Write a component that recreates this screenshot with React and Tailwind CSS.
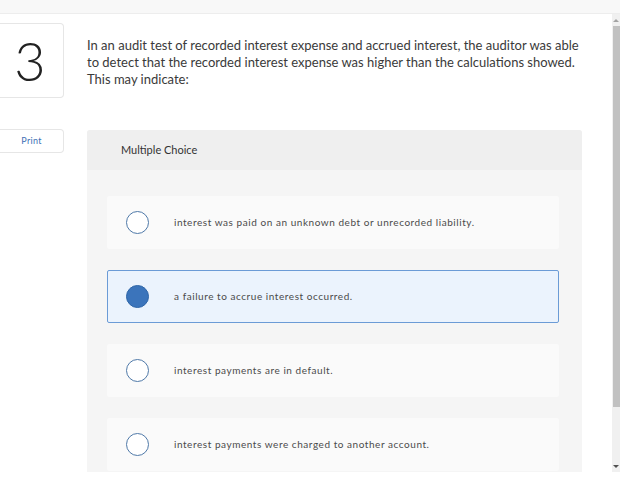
import React from 'react';

const options = [
  { id: 1, text: 'interest was paid on an unknown debt or unrecorded liability.' },
  { id: 2, text: 'a failure to accrue interest occurred.' },
  { id: 3, text: 'interest payments are in default.' },
  { id: 4, text: 'interest payments were charged to another account.' },
];

const Option = ({ text, selected }) => (
  <div
    className={
      'flex items-center h-[53px] shrink-0 rounded-[2px] ' +
      (selected ? 'bg-[#ebf3fd] border border-[#6b9bd6] pl-[18px]' : 'bg-[#fafafa] pl-[19px]')
    }
  >
    {selected ? (
      <span className="w-[23px] h-[23px] rounded-full bg-[#3b74bb] border border-[#2f66a8] shrink-0" />
    ) : (
      <span className="w-[23px] h-[23px] rounded-full bg-white border-[1.5px] border-[#4f79a8] shrink-0" />
    )}
    <span className="ml-[25px] text-[10px] tracking-[0.55px] text-[#4a4a4a]">{text}</span>
  </div>
);

export default function App() {
  const selected = 2;

  return (
    <div className="w-[630px] h-[496px] bg-white overflow-hidden font-['Lato','Open_Sans',sans-serif]">
      <div className="w-[620px] h-[14px] bg-[#f8f8f8] border-b border-[#ededed]" />

      <div className="flex w-[620px] h-[458px]">
        {/* Main */}
        <div className="flex w-[612px] overflow-hidden">
          <div className="w-[64px] shrink-0 pt-[9px] flex flex-col">
            <div className="h-[75px] border border-l-0 border-[#e6e6e6] rounded-r-[4px] flex items-center justify-center">
              <span className="text-[54px] leading-none font-light text-[#222] ml-[-3px]">3</span>
            </div>
            <div className="mt-[31px] h-[24px] border border-l-0 border-[#e6e6e6] rounded-r-[4px] flex items-center justify-center">
              <span className="text-[9px] tracking-[0.3px] text-[#3f70b5]">Print</span>
            </div>
          </div>

          <div className="ml-[23px] w-[495px] shrink-0 flex flex-col">
            <p className="mt-[23px] text-[13px] leading-[17px] text-[#3a3a3a] w-[495px]">
              In an audit test of recorded interest expense and accrued interest, the auditor was able to detect that the recorded interest expense was higher than the calculations showed. This may indicate:
            </p>

            <div className="mt-[42px] flex flex-col bg-[#f5f5f5] rounded-t-[3px] grow">
              <div className="h-[40px] bg-[#efefef] rounded-t-[3px] flex items-center pl-[34px]">
                <span className="text-[11px] text-[#333]">Multiple Choice</span>
              </div>
              <div className="pt-[26px] pl-[20px] pr-[23px] flex flex-col gap-[21px]">
                {options.map(o => (
                  <Option key={o.id} text={o.text} selected={o.id === selected} />
                ))}
              </div>
            </div>
          </div>
        </div>

        {/* Scrollbar */}
        <div className="w-[8px] bg-[#f0f0f0] flex flex-col items-center">
          <div className="h-[12px] flex items-center justify-center">
            <span className="w-0 h-0 border-l-[3px] border-r-[3px] border-b-[3px] border-l-transparent border-r-transparent border-b-[#a3a3a3]" />
          </div>
          <div className="w-[7px] h-[381px] bg-[#c1c1c1]" />
          <div className="grow" />
          <div className="h-[12px] flex items-center justify-center">
            <span className="w-0 h-0 border-l-[3px] border-r-[3px] border-t-[3px] border-l-transparent border-r-transparent border-t-[#505050]" />
          </div>
        </div>
      </div>
    </div>
  );
}
